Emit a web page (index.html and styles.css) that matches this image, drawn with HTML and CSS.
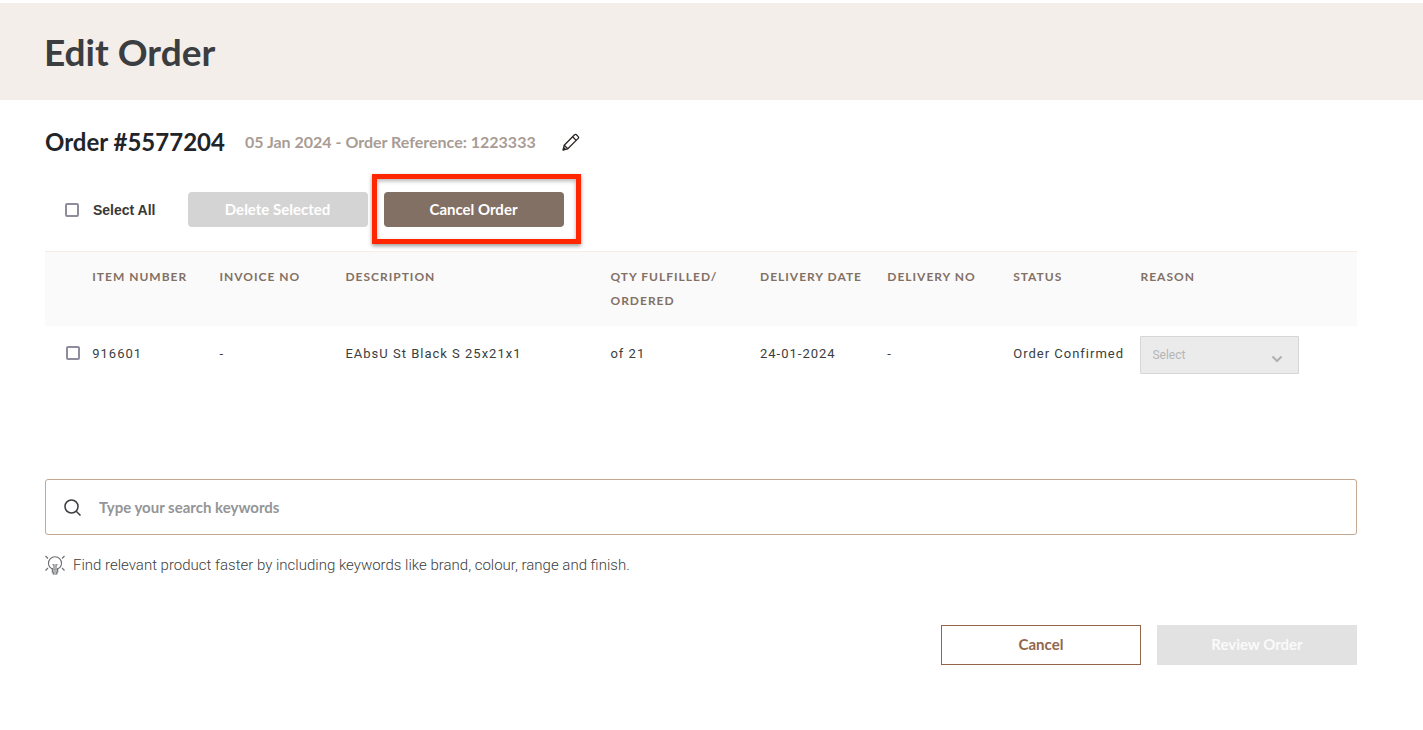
FILE: index.html
```html
<!DOCTYPE html>
<html lang="en">
<head>
    <meta charset="UTF-8">
    <meta name="viewport" content="width=device-width, initial-scale=1.0">
    <title>Edit Order</title>
    <link rel="stylesheet" href="styles.css">
</head>
<body>

    <header class="page-header">
        <h1>Edit Order</h1>
    </header>

    <main class="container">
        <div class="order-title">
            <h2>Order #5577204</h2>
            <span class="order-meta">05 Jan 2024 - Order Reference: 1223333</span>
            <button class="icon-button" type="button" aria-label="Edit order reference">
                <svg width="18" height="18" viewBox="0 0 18 18" fill="none" stroke="#2b2422" stroke-width="1.3" stroke-linejoin="round">
                    <path d="M1.2 16.8l1-4.6L12.6 1.8q.9-.9 1.8 0l1.8 1.8q.9.9 0 1.8L5.8 15.8z"/>
                    <path d="M10.6 3.8l3.6 3.6M2.2 12.2l3.6 3.6"/>
                    <path d="M1.2 16.8l.5-2 1.5 1.5z" fill="#2b2422"/>
                </svg>
            </button>
        </div>

        <div class="toolbar">
            <label class="select-all">
                <input type="checkbox" class="checkbox">
                Select All
            </label>
            <button class="btn btn-delete" type="button" disabled>Delete Selected</button>
            <div class="highlight">
                <button class="btn btn-cancel-order" type="button">Cancel Order</button>
            </div>
        </div>

        <table class="order-table">
            <colgroup>
                <col class="col-check">
                <col class="col-item">
                <col class="col-invoice">
                <col class="col-description">
                <col class="col-qty">
                <col class="col-date">
                <col class="col-delivery">
                <col class="col-status">
                <col class="col-reason">
            </colgroup>
            <thead>
                <tr>
                    <th></th>
                    <th>Item Number</th>
                    <th>Invoice No</th>
                    <th>Description</th>
                    <th>Qty Fulfilled/<br>Ordered</th>
                    <th>Delivery Date</th>
                    <th>Delivery No</th>
                    <th>Status</th>
                    <th>Reason</th>
                </tr>
            </thead>
            <tbody>
                <tr>
                    <td class="check-cell"><input type="checkbox" class="checkbox" aria-label="Select item 916601"></td>
                    <td>916601</td>
                    <td>-</td>
                    <td>EAbsU St Black S 25x21x1</td>
                    <td>of 21</td>
                    <td>24-01-2024</td>
                    <td>-</td>
                    <td>Order Confirmed</td>
                    <td class="reason-cell">
                        <div class="select-box">
                            <select aria-label="Reason" disabled>
                                <option>Select</option>
                            </select>
                            <svg class="chevron" width="12" height="8" viewBox="0 0 12 8" fill="none" stroke="#b0b0b0" stroke-width="2">
                                <path d="M1.5 1.5L6 6l4.5-4.5"/>
                            </svg>
                        </div>
                    </td>
                </tr>
            </tbody>
        </table>

        <div class="search-box">
            <svg width="18" height="18" viewBox="0 0 18 18" fill="none" stroke="#3b3d40" stroke-width="1.5">
                <circle cx="7.5" cy="8.5" r="6.5"/>
                <path d="M12.2 13.2l4.3 4.3"/>
            </svg>
            <input type="text" placeholder="Type your search keywords" aria-label="Search products">
        </div>

        <p class="hint">
            <svg width="20" height="20" viewBox="0 0 20 20" fill="none" stroke="#6a6c6f" stroke-width="1.1">
                <path d="M7.3 13.8C4.900 12.800 3.500 10.700 3.500 8.200a6.500 6.500 0 0 1 13 0c0 2.500-1.400 4.600-3.800 5.600"/>
                <path d="M7.300 13v4h5.400v-4M7.300 15h5.400M8.200 17v2h3.600v-2"/>
                <path d="M9 14.500V9.800H7.500M11 14.500V9.800h1.500"/>
                <path d="M.5 1l2.500 2.500M19.500 1L17 3.500M.5 15.500L3 13M19.500 15.500L17 13"/>
            </svg>
            Find relevant product faster by including keywords like brand, colour, range and finish.
        </p>

        <div class="actions">
            <button class="btn btn-outline" type="button">Cancel</button>
            <button class="btn btn-review" type="button" disabled>Review Order</button>
        </div>
    </main>

</body>
</html>
```
FILE: styles.css
```css
* {
    box-sizing: border-box;
}

body {
    font-family: 'Roboto', sans-serif;
    margin: 0;
    padding: 3px 0 0;
    background-color: #fff;
    color: #3b3d40;
}

.page-header {
    background: #f4eeea;
    padding: 27px 44px 26px;
}

.page-header h1 {
    margin: 0;
    font-family: 'Lato', sans-serif;
    font-size: 37px;
    line-height: 44px;
    font-weight: bold;
    color: #3b3d40;
}

.container {
    padding: 26px 66px 40px 45px;
}

.order-title {
    display: flex;
    align-items: center;
    height: 32px;
    gap: 20px;
    font-family: 'Lato', sans-serif;
}

.order-title h2 {
    margin: 0;
    font-size: 24px;
    line-height: 32px;
    color: #212429;
}

.order-meta {
    font-size: 16px;
    line-height: 24px;
    font-weight: bold;
    color: #a89c94;
}

.icon-button {
    display: flex;
    padding: 0 6px;
    border: none;
    background: none;
    cursor: pointer;
}

.toolbar {
    display: flex;
    align-items: center;
    gap: 16px;
    padding: 34px 0 24px 20px;
}

.select-all {
    display: flex;
    align-items: center;
    gap: 14px;
    margin-right: 16px;
    font-family: 'Liberation Sans', sans-serif;
    font-size: 14px;
    font-weight: bold;
    color: #3a3835;
}

.checkbox {
    appearance: none;
    width: 14px;
    height: 14px;
    margin: 0;
    border: 2px solid #8f8c9e;
    border-radius: 2px;
    background: #fff;
}

.checkbox:checked {
    background: #8f8c9e;
}

.btn {
    padding: 0 0 2px;
    font-family: 'Lato', sans-serif;
    font-size: 15px;
    font-weight: bold;
    border: none;
    cursor: pointer;
}

.btn:disabled {
    cursor: default;
}

.btn-delete,
.btn-cancel-order {
    display: block;
    width: 180px;
    height: 35px;
    border-radius: 4px;
    color: #fff;
}

.btn-delete {
    background: #d4d4d4;
}

.btn-cancel-order {
    background: #837065;
}

.highlight {
    position: relative;
}

.highlight::after {
    content: '';
    position: absolute;
    top: -18px;
    right: -17px;
    bottom: -17px;
    left: -12px;
    border: 5px solid #ff2600;
    box-shadow: 0 2px 4px rgba(0, 0, 0, 0.4), inset 0 2px 4px rgba(0, 0, 0, 0.3);
    pointer-events: none;
}

.order-table {
    width: 100%;
    table-layout: fixed;
    border-collapse: separate;
    border-spacing: 0;
    text-align: left;
}

.col-check { width: 3.6%; }
.col-item { width: 9.7%; }
.col-invoice { width: 9.6%; }
.col-description { width: 20.2%; }
.col-qty { width: 11.4%; }
.col-date { width: 9.7%; }
.col-delivery { width: 9.6%; }
.col-status { width: 9.7%; }
.col-reason { width: 16.5%; }

.order-table th {
    padding: 13px 0;
    border-top: 1px solid #f4ece6;
    background: #fafafa;
    font-family: 'Lato', sans-serif;
    font-size: 12px;
    line-height: 24px;
    letter-spacing: 1px;
    text-transform: uppercase;
    vertical-align: top;
    white-space: nowrap;
    color: #837065;
}

.order-table td {
    padding: 16px 0;
    font-size: 13px;
    line-height: 24px;
    letter-spacing: 1px;
    vertical-align: top;
    white-space: nowrap;
}

.order-table .check-cell {
    padding: 20px 0 0 21px;
    line-height: 0;
}

.order-table .reason-cell {
    padding: 10px 0;
}

.select-box {
    position: relative;
    width: 159px;
}

.select-box select {
    appearance: none;
    display: block;
    width: 100%;
    height: 38px;
    padding: 0 11px;
    border: 1px solid #d6d6d6;
    border-radius: 1px;
    background: #ebebeb;
    font-family: 'Roboto', sans-serif;
    font-size: 12px;
    color: #b5b5b5;
    opacity: 1;
}

.chevron {
    position: absolute;
    right: 16px;
    top: 19px;
    pointer-events: none;
}

.search-box {
    display: flex;
    align-items: center;
    gap: 17px;
    height: 56px;
    margin-top: 95px;
    padding: 0 18px;
    border: 1px solid #c6a78f;
    border-radius: 3px;
}

.search-box input {
    flex: 1;
    height: 40px;
    padding: 0;
    border: none;
    outline: none;
    background: none;
    font-family: 'Lato', sans-serif;
    font-size: 15px;
    font-weight: bold;
    color: #3b3d40;
}

.search-box input::placeholder {
    color: #939598;
    opacity: 1;
}

.hint {
    display: flex;
    align-items: center;
    gap: 8px;
    margin: 18px 0 0;
    font-size: 15px;
    font-weight: 300;
    line-height: 24px;
}

.actions {
    display: flex;
    justify-content: flex-end;
    gap: 16px;
    margin-top: 48px;
}

.btn-outline,
.btn-review {
    width: 200px;
    height: 40px;
}

.btn-outline {
    border: 1px solid #91664a;
    background: #fff;
    color: #91664a;
}

.btn-review {
    background: #e2e2e2;
    color: #fafafa;
}
```
